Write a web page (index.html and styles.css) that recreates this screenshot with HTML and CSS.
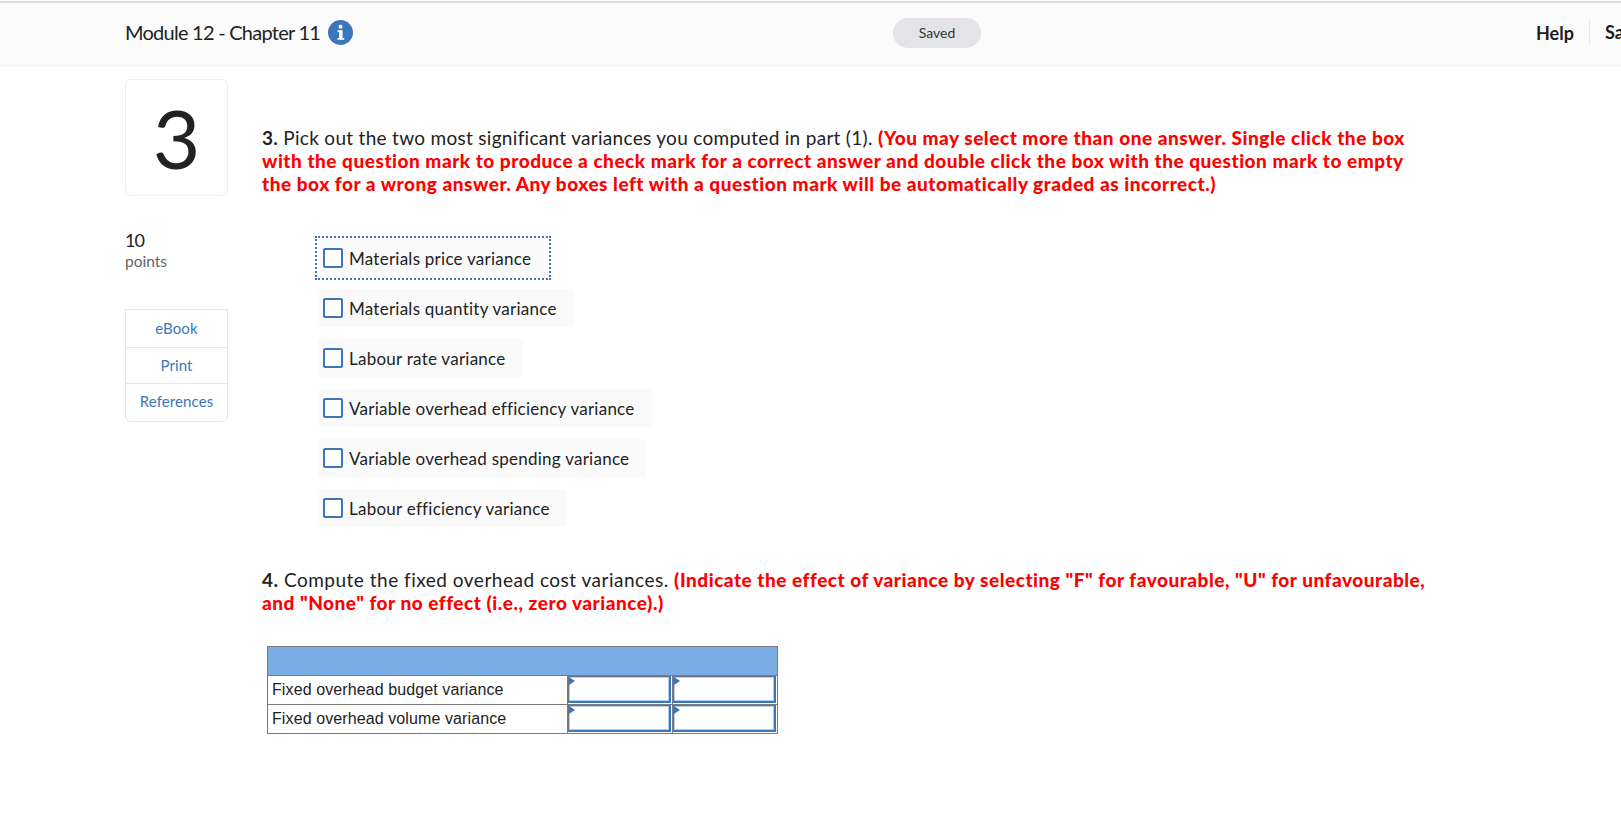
FILE: index.html
```html
<!DOCTYPE html>
<html lang="en">
<head>
    <meta charset="UTF-8">
    <title>Module 12 - Chapter 11</title>
    <link rel="stylesheet" href="styles.css">
</head>
<body>
    <header class="top-bar">
        <div class="top-left">
            <span class="module-title">Module 12 - Chapter 11</span>
            <svg class="info-icon" viewBox="0 0 25 25" aria-hidden="true">
                <circle cx="12.5" cy="12.5" r="12.5" fill="#3b76bb"/>
                <path d="M9.6 10.2h5v7.9h1.6v1.7H9.4v-1.7h1.6v-6.2H9.6z M12.6 4.8a2 2 0 1 1 0 4a2 2 0 0 1 0-4z" fill="#fff"/>
            </svg>
        </div>
        <div class="saved-pill">Saved</div>
        <div class="top-right">
            <span class="top-link">Help</span>
            <span class="top-link top-link-save">Save &amp; Exit</span>
        </div>
    </header>

    <main class="page">
        <aside class="side">
            <div class="question-num">3</div>
            <div class="points">
                <div class="points-val">10</div>
                <div class="points-label">points</div>
            </div>
            <nav class="side-links">
                <a class="side-link">eBook</a>
                <a class="side-link side-link-mid">Print</a>
                <a class="side-link side-link-last">References</a>
            </nav>
        </aside>

        <section class="content">
            <p class="question q3">
                <b>3.</b> Pick out the two most significant variances you computed in part (1).
                <span class="note">(You may select more than one answer. Single click the box with the question mark to produce a check mark for a correct answer and double click the box with the question mark to empty the box for a wrong answer. Any boxes left with a question mark will be automatically graded as incorrect.)</span>
            </p>

            <div class="options">
                <div class="option option-focus"><span class="check"></span>Materials price variance</div>
                <div class="option"><span class="check"></span>Materials quantity variance</div>
                <div class="option"><span class="check"></span>Labour rate variance</div>
                <div class="option"><span class="check"></span>Variable overhead efficiency variance</div>
                <div class="option"><span class="check"></span>Variable overhead spending variance</div>
                <div class="option"><span class="check"></span>Labour efficiency variance</div>
            </div>

            <p class="question q4">
                <b>4.</b> Compute the fixed overhead cost variances.
                <span class="note">(Indicate the effect of variance by selecting "F" for favourable, "U" for unfavourable, and "None" for no effect (i.e., zero variance).)</span>
            </p>

            <table class="grid">
                <colgroup>
                    <col class="col-label">
                    <col class="col-pick">
                    <col class="col-pick">
                </colgroup>
                <tr class="grid-head"><td colspan="3"></td></tr>
                <tr>
                    <td class="grid-label">Fixed overhead budget variance</td>
                    <td class="grid-cell"><div class="pick"></div></td>
                    <td class="grid-cell"><div class="pick"></div></td>
                </tr>
                <tr>
                    <td class="grid-label">Fixed overhead volume variance</td>
                    <td class="grid-cell"><div class="pick"></div></td>
                    <td class="grid-cell"><div class="pick"></div></td>
                </tr>
            </table>
        </section>
    </main>
</body>
</html>
```

FILE: styles.css
```css
html, body {
    margin: 0;
    height: 100%;
    overflow: hidden;
}
body {
    font-family: Lato, "Open Sans", sans-serif;
    color: #222;
    background: #fff;
}
.top-bar {
    display: flex;
    align-items: center;
    box-sizing: border-box;
    height: 65px;
    margin-top: 1px;
    padding: 0 0 3px 125px;
    border-top: 2px solid #dcdbe2;
    border-bottom: 1px solid #eeeeef;
    background: #fbfbfc;
    white-space: nowrap;
    overflow: hidden;
}
.top-left {
    display: flex;
    align-items: center;
    gap: 8px;
    width: 768px;
    flex: none;
}
.module-title {
    padding-bottom: 2px;
    font-size: 20px;
    letter-spacing: -0.75px;
    color: #222;
}
.info-icon {
    width: 25px;
    height: 25px;
}
.saved-pill {
    flex: none;
    width: 88px;
    height: 30px;
    line-height: 29px;
    text-align: center;
    border-radius: 15px;
    background: #e4e3e7;
    font-size: 14px;
    color: #333;
}
.top-right {
    display: flex;
    align-items: center;
    flex: none;
    margin-left: 555px;
}
.top-link {
    font-size: 18px;
    font-weight: 700;
    padding-right: 15px;
    color: #1c1c1c;
}
.top-link-save {
    padding-left: 15px;
    border-left: 1px solid #e6e6e8;
    line-height: 25px;
}
.page {
    display: flex;
    padding-left: 125px;
}
.side {
    width: 103px;
    margin-right: 34px;
    flex: none;
}
.question-num {
    box-sizing: border-box;
    height: 117px;
    margin-top: 13px;
    border: 1px solid #eeeeef;
    border-radius: 6px;
    text-align: center;
    font-size: 82px;
    line-height: 115px;
    font-weight: 400;
    color: #222;
}
.points {
    margin-top: 32px;
}
.points-val {
    font-size: 18px;
    line-height: 24px;
    letter-spacing: -1px;
}
.points-label {
    font-size: 15.5px;
    line-height: 19px;
    color: #666;
}
.side-links {
    margin-top: 38px;
    border: 1px solid #e8e8ea;
    border-radius: 0 0 6px 6px;
    text-align: center;
}
.side-link {
    display: block;
    height: 37px;
    line-height: 37px;
    font-size: 15px;
    letter-spacing: 0.1px;
    color: #3b76bb;
    border-bottom: 1px solid #e8e8ea;
}
.side-link-mid {
    height: 35px;
    line-height: 35px;
}
.side-link-last {
    height: 37px;
    line-height: 34px;
    border-bottom: none;
}
.content {
    width: 1170px;
}
.question {
    margin: 0;
    font-size: 19px;
    line-height: 23px;
    letter-spacing: 0.3px;
    color: #222;
}
.q3 {
    margin-top: 60px;
}
.q4 {
    margin-top: 41px;
    letter-spacing: 0.5px;
}
.note {
    color: #f00;
    font-weight: 900;
    letter-spacing: 0.52px;
}
.options {
    display: flex;
    flex-direction: column;
    align-items: flex-start;
    gap: 12px;
    margin-top: 44px;
    margin-left: 56px;
}
.option {
    display: flex;
    align-items: center;
    box-sizing: border-box;
    height: 38px;
    padding: 0 17px 0 5px;
    border-radius: 3px;
    background: #fafafa;
    font-size: 17px;
    letter-spacing: 0.25px;
    color: #222;
}
.option-focus {
    outline: 2px dotted #3b76bb;
    outline-offset: 1px;
    border-radius: 0;
}
.check {
    box-sizing: border-box;
    width: 20px;
    height: 20px;
    margin-right: 6px;
    border: 2px solid #3b76bb;
    border-radius: 2px;
    background: #fff;
}
.grid {
    margin-top: 32px;
    margin-left: 5px;
    width: 511px;
    table-layout: fixed;
    border-collapse: collapse;
    font-family: "Liberation Sans", Arial, sans-serif;
    font-size: 16px;
    letter-spacing: 0.1px;
    color: #222;
}
.col-label {
    width: 300px;
}
.col-pick {
    width: 105px;
}
.grid td {
    border: 1px solid #7b7b7b;
    padding: 0;
}
.grid-head td {
    height: 28px;
    background: #7aade6;
}
.grid .grid-label {
    height: 27px;
    padding-left: 4px;
    white-space: nowrap;
}
.pick {
    position: relative;
    box-sizing: border-box;
    height: 27px;
    margin: 0 1px 1px 0;
    border-style: solid;
    border-width: 1px 2px 2px 1px;
    border-color: #6d7680 #3b76bb #3b76bb #6d7680;
    box-shadow: inset 0 0 0 1px #b3cdec;
}
.pick::before {
    content: "";
    position: absolute;
    left: 0;
    top: 0;
    border-left: 6px solid #3b76bb;
    border-top: 4px solid transparent;
    border-bottom: 4px solid transparent;
}
```
